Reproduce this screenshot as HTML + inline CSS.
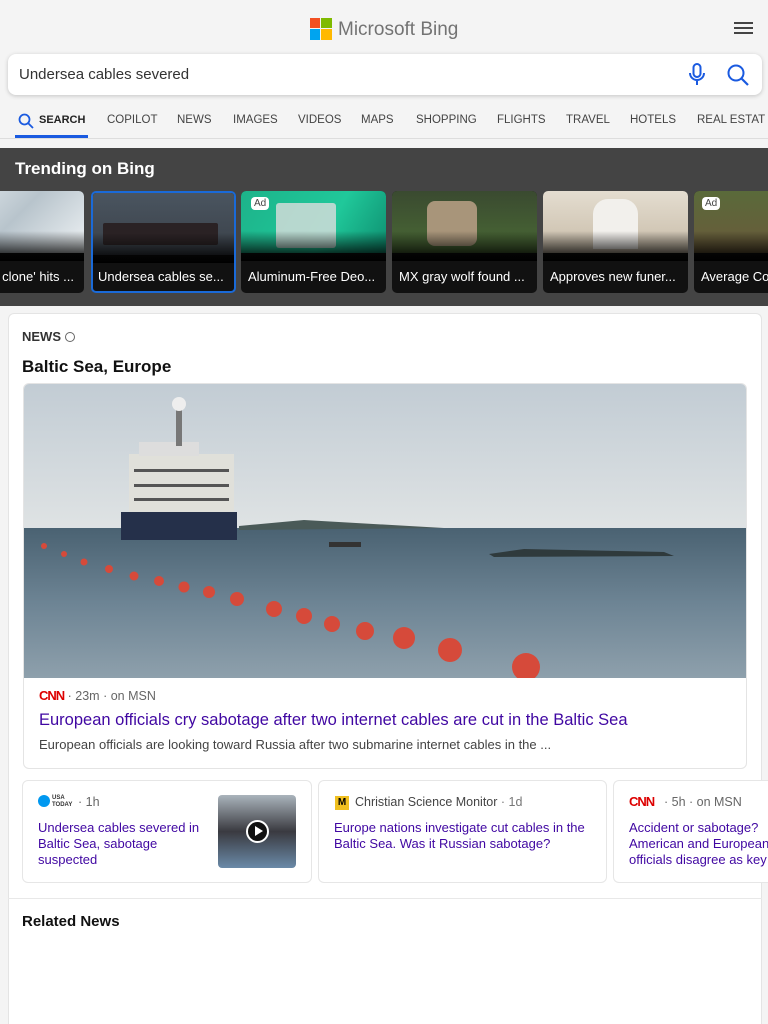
<!DOCTYPE html>
<html><head><meta charset="utf-8"><style>
*{box-sizing:border-box;margin:0;padding:0}
html,body{width:768px;height:1024px;overflow:hidden}
body{background:#f4f4f4;font-family:"Liberation Sans",Arial,sans-serif;position:relative}
.abs{position:absolute}
.tab{position:absolute;top:114px;font-size:11.5px;color:#444}
.card{position:absolute;top:191px;height:102px;width:145px;border-radius:5px;overflow:hidden;background:#111}
.card .img{position:absolute;left:0;top:0;right:0;height:62px}
.card .shade{position:absolute;left:0;right:0;top:40px;height:30px;background:linear-gradient(rgba(0,0,0,0),#000)}
.card .t{position:absolute;left:7px;right:6px;top:78px;color:#fff;font-size:13px;white-space:nowrap;overflow:hidden;text-overflow:ellipsis}
.ad{position:absolute;top:6px;left:10px;background:#fff;color:#444;font-size:10px;border-radius:4px;padding:1px 3px}
.sub{position:absolute;top:780px;height:103px;background:#fff;border:1px solid #e6e6e6;border-radius:6px;overflow:hidden}
.purple{color:#4007a2}
</style></head><body>
<div class="abs" style="left:310px;top:18px;width:10px;height:10px;background:#f25022"></div>
<div class="abs" style="left:321px;top:18px;width:11px;height:10px;background:#7fba00"></div>
<div class="abs" style="left:310px;top:29px;width:10px;height:11px;background:#00a4ef"></div>
<div class="abs" style="left:321px;top:29px;width:11px;height:11px;background:#ffb900"></div>
<div class="abs" style="left:338px;top:19px;font-size:19px;color:#737373">Microsoft Bing</div>
<div class="abs" style="left:734px;top:22px;width:19px;height:2px;background:#444;box-shadow:0 5px 0 #444,0 10px 0 #444"></div>
<div class="abs" style="left:8px;top:54px;width:754px;height:41px;background:#fff;border-radius:8px;box-shadow:0 1px 4px rgba(0,0,0,.2)"></div>
<div class="abs" style="left:19px;top:66px;font-size:15px;color:#333">Undersea cables severed</div>
<svg class="abs" style="left:688px;top:63px" width="18" height="24" viewBox="0 0 18 24"><rect x="5.5" y="1" width="7" height="13" rx="3.5" fill="none" stroke="#1a5ae0" stroke-width="2"/><path d="M2 10a7 7 0 0 0 14 0M9 17v5" fill="none" stroke="#1a5ae0" stroke-width="2"/></svg>
<svg class="abs" style="left:726px;top:63px" width="24" height="24" viewBox="0 0 24 24"><circle cx="10" cy="10" r="7.5" fill="none" stroke="#1a5ae0" stroke-width="2"/><path d="M15.5 15.5L22 22" stroke="#1a5ae0" stroke-width="2.2"/></svg>
<svg class="abs" style="left:18px;top:113px" width="16" height="16" viewBox="0 0 16 16"><circle cx="6.5" cy="6.5" r="5" fill="none" stroke="#1a5ae0" stroke-width="1.8"/><path d="M10 10l5 5" stroke="#1a5ae0" stroke-width="1.8"/></svg>
<div class="tab" style="left:39px;font-weight:bold;color:#222;font-size:11px">SEARCH</div>
<div class="abs" style="left:15px;top:135px;width:73px;height:3px;background:#1a5ae0"></div>
<div class="tab" style="left:107px">COPILOT</div>
<div class="tab" style="left:177px">NEWS</div>
<div class="tab" style="left:233px">IMAGES</div>
<div class="tab" style="left:298px">VIDEOS</div>
<div class="tab" style="left:361px">MAPS</div>
<div class="tab" style="left:416px">SHOPPING</div>
<div class="tab" style="left:497px">FLIGHTS</div>
<div class="tab" style="left:566px">TRAVEL</div>
<div class="tab" style="left:630px">HOTELS</div>
<div class="tab" style="left:697px;white-space:nowrap">REAL ESTAT</div>
<div class="abs" style="left:0;top:138px;width:768px;height:1px;background:#ddd"></div>
<div class="abs" style="left:0;top:148px;width:768px;height:158px;background:#444"></div>
<div class="abs" style="left:15px;top:159px;color:#fff;font-size:17px;font-weight:bold">Trending on Bing</div>
<div class="card" style="left:-61px"><div class="img" style="background:linear-gradient(135deg,#e8eef2,#b8c4cc,#eef2f4)"></div><div class="shade"></div><div class="t" style="left:0;right:0;text-align:right;padding-right:10px;text-overflow:clip">clone' hits ...</div></div>
<div class="card" style="left:91px;border:2px solid #1a6ad8"><div class="img" style="background:linear-gradient(#4a5560,#3a4048);"></div><div class="abs" style="left:10px;top:30px;width:115px;height:22px;background:#2a2224;border-radius:2px"></div><div class="shade"></div><div class="t" style="left:5px;top:76px">Undersea cables se...</div></div>
<div class="card" style="left:241px"><div class="img" style="background:linear-gradient(120deg,#1db38a,#20c89a 60%,#0e8f70)"></div><div class="abs" style="left:35px;top:12px;width:60px;height:45px;background:#ddd;opacity:.8;border-radius:3px"></div><div class="shade"></div><div class="ad">Ad</div><div class="t">Aluminum-Free Deo...</div></div>
<div class="card" style="left:392px"><div class="img" style="background:linear-gradient(#3a4a30,#4a6a35)"></div><div class="abs" style="left:35px;top:10px;width:50px;height:45px;background:#a8957a;border-radius:8px"></div><div class="shade"></div><div class="t">MX gray wolf found ...</div></div>
<div class="card" style="left:543px"><div class="img" style="background:linear-gradient(#e4ddd0,#c8bca8)"></div><div class="abs" style="left:50px;top:8px;width:45px;height:50px;background:#f2f0ec;border-radius:15px 15px 0 0"></div><div class="shade"></div><div class="t">Approves new funer...</div></div>
<div class="card" style="left:694px;width:74px;border-radius:5px 0 0 5px"><div class="img" style="background:linear-gradient(#5a6a3a,#6a5a3a)"></div><div class="shade"></div><div class="ad" style="left:8px">Ad</div><div class="t" style="right:0;text-overflow:clip">Average Co</div></div>
<div class="abs" style="left:8px;top:313px;width:754px;height:711px;background:#fff;border:1px solid #e4e4e4;border-bottom:none;border-radius:6px 6px 0 0"></div>
<div class="abs" style="left:22px;top:329px;font-size:13px;font-weight:bold;color:#333">NEWS</div>
<div class="abs" style="left:65px;top:332px;width:10px;height:10px;border:1px solid #666;border-radius:50%"></div>
<div class="abs" style="left:22px;top:357px;font-size:17px;font-weight:bold;color:#111">Baltic Sea, Europe</div>
<div class="abs" style="left:23px;top:383px;width:724px;height:386px;border:1px solid #e4e4e4;border-radius:6px;overflow:hidden">
 <svg width="724" height="294" viewBox="0 0 724 294" style="display:block">
  <defs><linearGradient id="sky" x1="0" y1="0" x2="0" y2="1"><stop offset="0" stop-color="#c2ccd4"/><stop offset="1" stop-color="#dfe3e4"/></linearGradient>
  <linearGradient id="sea" x1="0" y1="0" x2="0" y2="1"><stop offset="0" stop-color="#4a6272"/><stop offset=".5" stop-color="#6d8494"/><stop offset="1" stop-color="#8ea0ac"/></linearGradient></defs>
  <rect width="724" height="146" fill="url(#sky)"/>
  <rect y="144" width="724" height="150" fill="url(#sea)"/>
  <path d="M215 142 L280 136 L420 144 L215 146Z" fill="#4a5a58"/>
  <path d="M465 170 L500 165 L640 168 L650 172 L470 173Z" fill="#2f3a3c"/>
  <rect x="305" y="158" width="32" height="5" fill="#333"/>
  <rect x="97" y="128" width="116" height="28" fill="#25304a"/>
  <rect x="105" y="70" width="105" height="58" fill="#e0e0da"/>
  <g fill="#555"><rect x="110" y="85" width="95" height="3"/><rect x="110" y="100" width="95" height="3"/><rect x="110" y="114" width="95" height="3"/></g>
  <rect x="115" y="58" width="60" height="14" fill="#ddd"/>
  <rect x="152" y="20" width="6" height="42" fill="#777"/>
  <circle cx="155" cy="20" r="7" fill="#eee"/>
  <g fill="#d64a3a">
   <circle cx="20" cy="162" r="3"/><circle cx="40" cy="170" r="3"/><circle cx="60" cy="178" r="3.5"/><circle cx="85" cy="185" r="4"/><circle cx="110" cy="192" r="4.5"/><circle cx="135" cy="197" r="5"/><circle cx="160" cy="203" r="5.5"/><circle cx="185" cy="208" r="6"/><circle cx="213" cy="215" r="7"/><circle cx="250" cy="225" r="8"/><circle cx="280" cy="232" r="8"/><circle cx="308" cy="240" r="8"/><circle cx="341" cy="247" r="9"/><circle cx="380" cy="254" r="11"/><circle cx="426" cy="266" r="12"/><circle cx="502" cy="283" r="14"/>
  </g>
 </svg>
 <div class="abs" style="left:15px;top:304px;font-size:12.5px;color:#666"><b style="color:#d00;font-size:13px;letter-spacing:-1px">CNN</b> · 23m · on MSN</div>
 <div class="abs purple" style="left:15px;top:327px;font-size:16.5px">European officials cry sabotage after two internet cables are cut in the Baltic Sea</div>
 <div class="abs" style="left:15px;top:353px;font-size:13px;color:#444">European officials are looking toward Russia after two submarine internet cables in the ...</div>
</div>
<div class="sub" style="left:22px;width:290px">
 <div class="abs" style="left:15px;top:14px;width:12px;height:12px;border-radius:50%;background:#0098f0"></div>
 <div class="abs" style="left:29px;top:14px;font-size:6px;font-weight:bold;color:#333;line-height:7px">USA<br>TODAY</div>
 <div class="abs" style="left:55px;top:14px;font-size:12.5px;color:#666">· 1h</div>
 <div class="abs purple" style="left:15px;top:39px;width:175px;font-size:13px;line-height:16px">Undersea cables severed in Baltic Sea, sabotage suspected</div>
 <div class="abs" style="left:195px;top:14px;width:78px;height:73px;border-radius:4px;background:linear-gradient(#aab4bc,#3a3a40 50%,#6a8aa8)"></div>
 <div class="abs" style="left:223px;top:39px;width:23px;height:23px;border-radius:50%;background:#111;border:2px solid #fff"></div>
 <div class="abs" style="left:232px;top:45px;border-left:8px solid #fff;border-top:5px solid transparent;border-bottom:5px solid transparent"></div>
</div>
<div class="sub" style="left:318px;width:289px">
 <div class="abs" style="left:16px;top:15px;width:14px;height:14px;background:#f0c020;font-size:10px;font-weight:bold;text-align:center;line-height:14px">M</div>
 <div class="abs" style="left:36px;top:14px;font-size:12.5px;color:#444">Christian Science Monitor <span style="color:#777">· 1d</span></div>
 <div class="abs purple" style="left:15px;top:39px;width:260px;font-size:13px;line-height:16px">Europe nations investigate cut cables in the Baltic Sea. Was it Russian sabotage?</div>
</div>
<div class="sub" style="left:613px;width:155px;border-right:none;border-radius:6px 0 0 6px">
 <div class="abs" style="left:15px;top:13px;color:#d00;font-weight:bold;font-size:13px;letter-spacing:-1px">CNN</div>
 <div class="abs" style="left:50px;top:14px;font-size:12.5px;color:#666;white-space:nowrap">· 5h · on MSN</div>
 <div class="abs purple" style="left:15px;top:39px;width:180px;font-size:13px;line-height:16px;white-space:nowrap">Accident or sabotage?<br>American and European<br>officials disagree as key</div>
</div>
<div class="abs" style="left:8px;top:898px;width:754px;height:1px;background:#e8e8e8"></div>
<div class="abs" style="left:22px;top:913px;font-size:15px;font-weight:bold;color:#111">Related News</div>
</body></html>
